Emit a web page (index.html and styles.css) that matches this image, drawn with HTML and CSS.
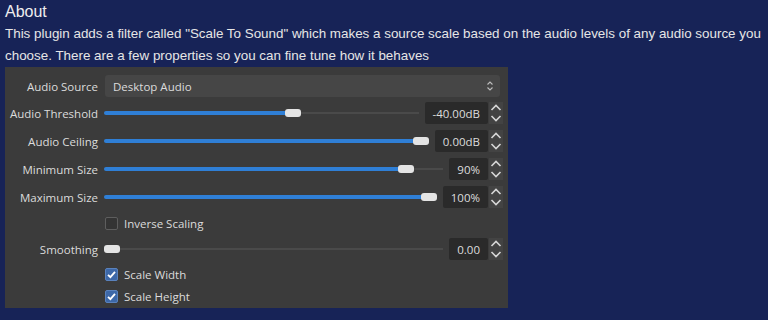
FILE: index.html
```html
<!DOCTYPE html>
<html>
<head>
<meta charset="utf-8">
<link rel="stylesheet" href="styles.css">
</head>
<body>
<div class="page">
  <h1 class="title">About</h1>
  <p class="desc">This plugin adds a filter called "Scale To Sound" which makes a source scale based on the audio levels of any audio source you choose. There are a few properties so you can fine tune how it behaves</p>
  <div class="panel">
    <div class="row row-combo">
      <div class="label">Audio Source</div>
      <div class="combo">
        <span>Desktop Audio</span>
        <svg class="combo-arrow" width="8" height="12" viewBox="0 0 8 12"><path d="M1.5 4.5 L4 2 L6.5 4.5 M1.5 7.5 L4 10 L6.5 7.5" fill="none" stroke="#bdbdbd" stroke-width="1.1"/></svg>
      </div>
    </div>
    <div class="row">
      <div class="label">Audio Threshold</div>
      <div class="slider" style="--p:0.606"><div class="track"></div><div class="fill"></div><div class="handle"></div></div>
      <div class="spin">-40.00dB</div>
      <div class="arrows"><svg width="14" height="22" viewBox="0 0 14 22"><path d="M2.5 8 L7 3.5 L11.5 8 M2.5 14 L7 18.5 L11.5 14" fill="none" stroke="#d6d6d6" stroke-width="1.6"/></svg></div>
    </div>
    <div class="row">
      <div class="label">Audio Ceiling</div>
      <div class="slider" style="--p:1"><div class="track"></div><div class="fill"></div><div class="handle"></div></div>
      <div class="spin">0.00dB</div>
      <div class="arrows"><svg width="14" height="22" viewBox="0 0 14 22"><path d="M2.5 8 L7 3.5 L11.5 8 M2.5 14 L7 18.5 L11.5 14" fill="none" stroke="#d6d6d6" stroke-width="1.6"/></svg></div>
    </div>
    <div class="row">
      <div class="label">Minimum Size</div>
      <div class="slider" style="--p:0.908"><div class="track"></div><div class="fill"></div><div class="handle"></div></div>
      <div class="spin">90%</div>
      <div class="arrows"><svg width="14" height="22" viewBox="0 0 14 22"><path d="M2.5 8 L7 3.5 L11.5 8 M2.5 14 L7 18.5 L11.5 14" fill="none" stroke="#d6d6d6" stroke-width="1.6"/></svg></div>
    </div>
    <div class="row">
      <div class="label">Maximum Size</div>
      <div class="slider" style="--p:1"><div class="track"></div><div class="fill"></div><div class="handle"></div></div>
      <div class="spin">100%</div>
      <div class="arrows"><svg width="14" height="22" viewBox="0 0 14 22"><path d="M2.5 8 L7 3.5 L11.5 8 M2.5 14 L7 18.5 L11.5 14" fill="none" stroke="#d6d6d6" stroke-width="1.6"/></svg></div>
    </div>
    <div class="row row-check">
      <div class="label"></div>
      <label class="check"><span class="box"></span>Inverse Scaling</label>
    </div>
    <div class="row">
      <div class="label">Smoothing</div>
      <div class="slider" style="--p:0"><div class="track"></div><div class="fill"></div><div class="handle"></div></div>
      <div class="spin">0.00</div>
      <div class="arrows"><svg width="14" height="22" viewBox="0 0 14 22"><path d="M2.5 8 L7 3.5 L11.5 8 M2.5 14 L7 18.5 L11.5 14" fill="none" stroke="#d6d6d6" stroke-width="1.6"/></svg></div>
    </div>
    <div class="row row-check-sm">
      <div class="label"></div>
      <label class="check"><span class="box checked"><svg width="13" height="13" viewBox="0 0 13 13"><path d="M3 6.8 L5.4 9.2 L10 3.8" fill="none" stroke="#ffffff" stroke-width="1.8"/></svg></span>Scale Width</label>
    </div>
    <div class="row row-check-sm">
      <div class="label"></div>
      <label class="check"><span class="box checked"><svg width="13" height="13" viewBox="0 0 13 13"><path d="M3 6.8 L5.4 9.2 L10 3.8" fill="none" stroke="#ffffff" stroke-width="1.8"/></svg></span>Scale Height</label>
    </div>
  </div>
</div>
</body>
</html>
```
FILE: styles.css
```css
html, body {
  margin: 0;
  padding: 0;
  background: #172357;
}
.page {
  width: 768px;
  height: 320px;
  overflow: hidden;
  padding-left: 5px;
  box-sizing: border-box;
}
.title {
  margin: 0;
  padding-top: 2px;
  font-family: "Liberation Sans", Arial, sans-serif;
  font-weight: normal;
  font-size: 16px;
  line-height: 20px;
  color: #eeeeee;
}
.desc {
  margin: 1px 0 0 0;
  width: 762px;
  font-family: "Liberation Sans", Arial, sans-serif;
  font-size: 13.4px;
  line-height: 22px;
  color: #e6e6e6;
}
.panel {
  width: 503px;
  height: 241px;
  box-sizing: border-box;
  background: #3b3b3b;
  padding: 8px 5px 3px 0;
  display: flex;
  flex-direction: column;
  gap: 4px;
  font-family: "Open Sans", "Noto Sans", sans-serif;
  font-size: 11.5px;
  color: #dcdcdc;
}
.row {
  height: 24px;
  display: flex;
  align-items: center;
}
.row-combo { height: 22px; }
.row-check { height: 20px; }
.row-check-sm { height: 18px; }
.label {
  width: 93px;
  flex: none;
  text-align: right;
  margin-right: 6px;
  white-space: nowrap;
}
.combo {
  flex: 1;
  height: 22px;
  margin-left: 1px;
  margin-right: 3px;
  background: #464646;
  border-radius: 3px;
  display: flex;
  align-items: center;
  justify-content: space-between;
  padding: 0 6px 0 8px;
}
.combo-arrow { display: block; }
.slider {
  flex: 1;
  position: relative;
  height: 10px;
  margin-right: 6px;
}
.track {
  position: absolute;
  left: 0;
  right: 0;
  top: 4px;
  height: 2px;
  background: #4a4a4a;
}
.fill {
  position: absolute;
  left: 0;
  top: 3px;
  height: 4px;
  border-radius: 2px;
  width: calc(var(--p) * (100% - 16px) + 4px);
  background: #2f7fd6;
}
.handle {
  position: absolute;
  top: 1px;
  left: calc(var(--p) * (100% - 16px));
  width: 16px;
  height: 8px;
  border-radius: 3px;
  background: #e4e4e4;
}
.spin {
  height: 22px;
  display: flex;
  align-items: center;
  padding: 0 8px;
  background: #2a2a2a;
  border-radius: 2px;
  color: #dddddd;
  flex: none;
}
.arrows {
  width: 14px;
  height: 22px;
  margin-left: 1px;
  background: #434343;
  flex: none;
}
.arrows svg { display: block; }
.check {
  display: flex;
  align-items: center;
  margin-left: 1px;
}
.box {
  width: 13px;
  height: 13px;
  box-sizing: border-box;
  border: 1px solid #5e5e5e;
  border-radius: 2px;
  background: #343434;
  margin-right: 6px;
  position: relative;
}
.box.checked {
  background: #3d68a8;
  border-color: #5a82bd;
}
.box svg {
  position: absolute;
  left: -1px;
  top: -1px;
}
```
